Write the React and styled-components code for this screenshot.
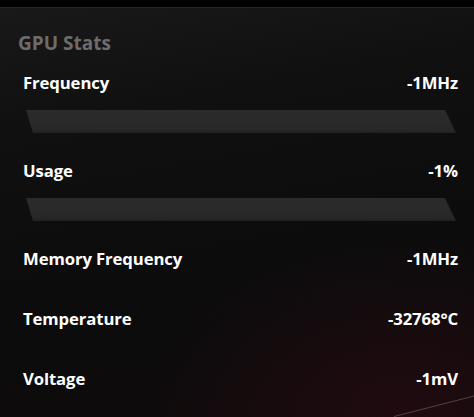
import React from 'react'
import styled, { createGlobalStyle } from 'styled-components'

const GlobalStyle = createGlobalStyle`
    html, body {
        margin: 0;
        padding: 0;
        background: #000;
    }
    body {
        font-family: "Open Sans", "Noto Sans", sans-serif;
    }
`

const Window = styled.div`
    position: relative;
    width: 474px;
    height: 417px;
    overflow: hidden;
    background: #000;
`
const TopStrip = styled.div`
    height: 7px;
    background: #020202;
`
const Panel = styled.div`
    height: 410px;
    box-sizing: border-box;
    padding: 24px 16px 0 23px;
    border-top: 1px solid #262626;
    background:
        radial-gradient(ellipse 75% 60% at 85% 100%, rgba(55, 12, 20, 0.45), rgba(55, 12, 20, 0) 75%),
        linear-gradient(170deg, #191919 0%, #101010 25%, #0c0c0d 60%, #0e0a0b 100%);
`
const Title = styled.h2`
    margin: -1px 0 16px -5px;
    height: 24px;
    line-height: 24px;
    font-size: 19px;
    font-weight: 700;
    color: #6c6c6c;
`
const Stat = styled.div`
    display: flex;
    flex-direction: column;
    margin-bottom: ${p => p.$bar ? 26 : 36}px;
`
const Row = styled.div`
    display: flex;
    justify-content: space-between;
    align-items: center;
    height: 24px;
    margin-top: -1px;
    margin-bottom: 1px;
    font-size: 16.7px;
    font-weight: 700;
    color: #fff;
    letter-spacing: -0.1px;
`
const Bar = styled.div`
    margin: 15px 0 0 -1px;
    width: 434px;
    height: 23px;
    background: linear-gradient(180deg, #2b2b2b 0%, #282828 85%, #202020 100%);
    clip-path: polygon(4px 0, calc(100% - 11px) 0, 100% 100%, 11px 100%);
`
const Streak = styled.svg`
    position: absolute;
    right: 0;
    bottom: 0;
`

const stats = [
    { label: 'Frequency', value: '-1MHz', bar: true },
    { label: 'Usage', value: '-1%', bar: true },
    { label: 'Memory Frequency', value: '-1MHz' },
    { label: 'Temperature', value: '-32768°C' },
    { label: 'Voltage', value: '-1mV' },
]

export default function App() {
    return (
        <Window>
            <GlobalStyle />
            <TopStrip />
            <Panel>
                <Title>GPU Stats</Title>
                {stats.map(s => (
                    <Stat key={s.label} $bar={s.bar}>
                        <Row>
                            <span>{s.label}</span>
                            <span>{s.value}</span>
                        </Row>
                        {s.bar && <Bar />}
                    </Stat>
                ))}
            </Panel>
            <Streak width="80" height="22" viewBox="0 0 80 22">
                <line x1="0" y1="21.5" x2="80" y2="1" stroke="#6a5a5c" strokeWidth="1" opacity="0.7" />
            </Streak>
        </Window>
    )
}
